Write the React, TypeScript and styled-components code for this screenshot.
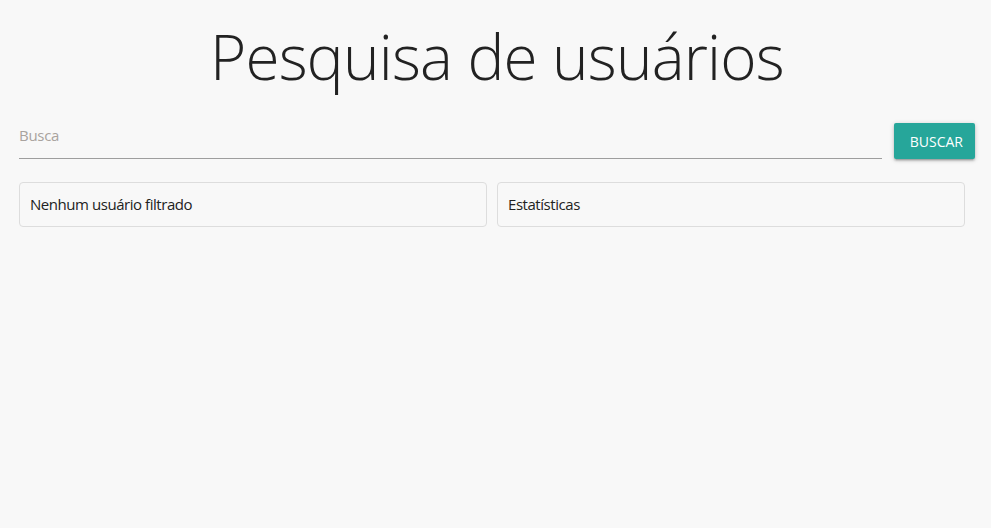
import styled, { createGlobalStyle } from 'styled-components'

const GlobalStyle = createGlobalStyle`
  html, body {
    margin: 0;
    padding: 0;
    background-color: #f8f8f8;
    font-family: 'Open Sans', 'Noto Sans', sans-serif;
    color: rgba(0, 0, 0, 0.87);
  }
  * {
    box-sizing: border-box;
  }
`

const Page = styled.div`
  min-height: 528px;
  padding: 25px 16px 0 19px;
`

const Title = styled.h1`
  margin: 0;
  font-size: 62px;
  font-weight: 300;
  line-height: 1;
  letter-spacing: -0.8px;
  text-align: center;
  color: #222;
`

const SearchRow = styled.form`
  display: flex;
  align-items: flex-end;
  gap: 12px;
  margin-top: 24px;
`

const SearchInput = styled.input`
  flex: 1;
  height: 48px;
  padding: 0;
  border: none;
  border-bottom: 1px solid #9e9e9e;
  background: transparent;
  outline: none;
  font-family: inherit;
  font-size: 15px;
  letter-spacing: -0.3px;
  color: rgba(0, 0, 0, 0.87);

  &::placeholder {
    color: #a9a39e;
  }
`

const SearchButton = styled.button`
  height: 36px;
  padding: 0 12px 0 16px;
  border: none;
  border-radius: 2px;
  background-color: #26a69a;
  color: #fff;
  font-family: inherit;
  font-size: 14px;
  letter-spacing: 0;
  text-transform: uppercase;
  cursor: pointer;
  box-shadow: 0 2px 2px 0 rgba(0, 0, 0, 0.14), 0 3px 1px -2px rgba(0, 0, 0, 0.12),
    0 1px 5px 0 rgba(0, 0, 0, 0.2);
`

const Panels = styled.div`
  display: grid;
  grid-template-columns: 1fr 1fr;
  gap: 10px;
  margin-top: 23px;
  margin-right: 10px;
`

const Panel = styled.div`
  height: 45px;
  padding: 0 10px 2px;
  display: flex;
  align-items: center;
  border: 1px solid #dddddd;
  border-radius: 4px;
  font-size: 15px;
  letter-spacing: -0.45px;
  color: #222;
`

export default function App() {
  return (
    <>
      <GlobalStyle />
      <Page>
        <Title>Pesquisa de usuários</Title>
        <SearchRow onSubmit={(e) => e.preventDefault()}>
          <SearchInput placeholder="Busca" />
          <SearchButton type="submit">Buscar</SearchButton>
        </SearchRow>
        <Panels>
          <Panel>Nenhum usuário filtrado</Panel>
          <Panel>Estatísticas</Panel>
        </Panels>
      </Page>
    </>
  )
}
